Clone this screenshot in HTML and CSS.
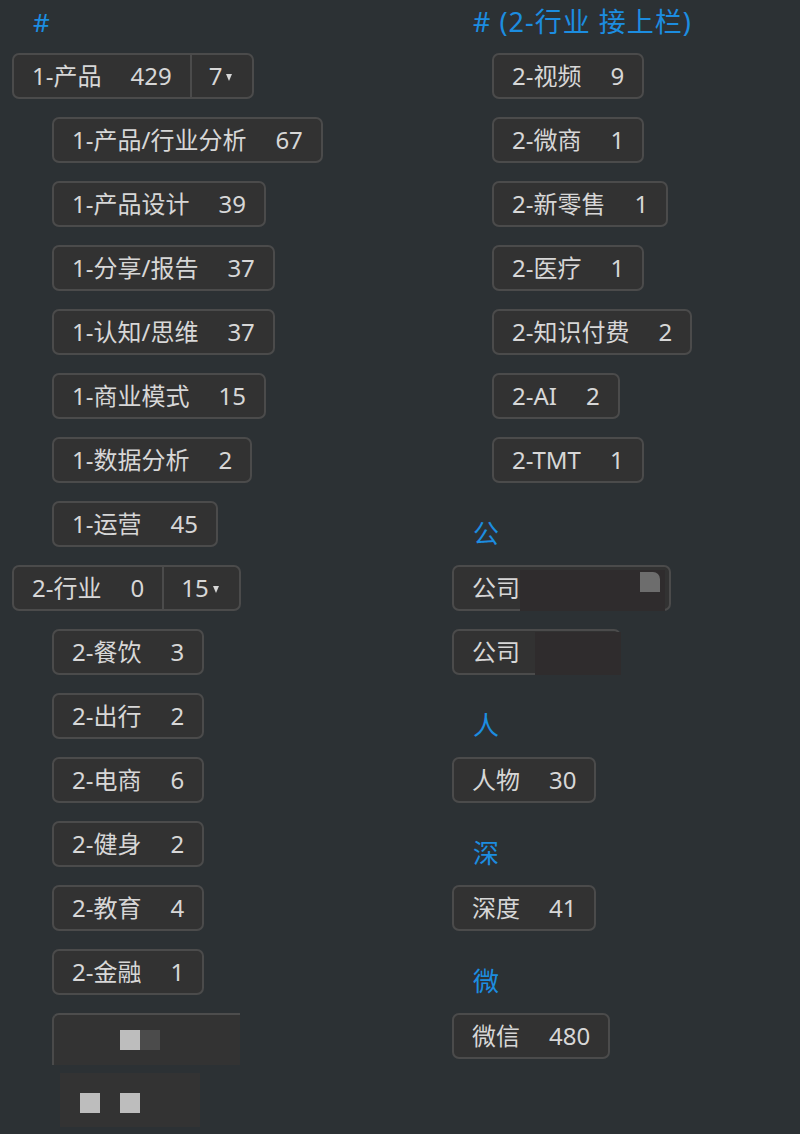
FILE: index.html
```html
<!DOCTYPE html>
<html lang="zh">
<head>
<meta charset="utf-8">
<title>Tags</title>
<link rel="stylesheet" href="styles.css">
</head>
<body>
<div class="page">
  <div class="col col-left">
    <div class="head head-top">#</div>
    <div class="tag split">
      <span class="seg"><span class="lbl">1-产品</span><span class="num">429</span></span>
      <span class="seg drop">7<span class="caret"></span></span>
    </div>
    <div class="tag sub"><span class="lbl">1-产品/行业分析</span><span class="num">67</span></div>
    <div class="tag sub"><span class="lbl">1-产品设计</span><span class="num">39</span></div>
    <div class="tag sub"><span class="lbl">1-分享/报告</span><span class="num">37</span></div>
    <div class="tag sub"><span class="lbl">1-认知/思维</span><span class="num">37</span></div>
    <div class="tag sub"><span class="lbl">1-商业模式</span><span class="num">15</span></div>
    <div class="tag sub"><span class="lbl">1-数据分析</span><span class="num">2</span></div>
    <div class="tag sub"><span class="lbl">1-运营</span><span class="num">45</span></div>
    <div class="tag split">
      <span class="seg"><span class="lbl">2-行业</span><span class="num">0</span></span>
      <span class="seg drop">15<span class="caret"></span></span>
    </div>
    <div class="tag sub"><span class="lbl">2-餐饮</span><span class="num">3</span></div>
    <div class="tag sub"><span class="lbl">2-出行</span><span class="num">2</span></div>
    <div class="tag sub"><span class="lbl">2-电商</span><span class="num">6</span></div>
    <div class="tag sub"><span class="lbl">2-健身</span><span class="num">2</span></div>
    <div class="tag sub"><span class="lbl">2-教育</span><span class="num">4</span></div>
    <div class="tag sub"><span class="lbl">2-金融</span><span class="num">1</span></div>
    <div class="masked masked-a">
      <span class="sq sq-light"></span><span class="sq sq-dark"></span>
    </div>
    <div class="masked masked-b">
      <span class="sq sq-light"></span><span class="sq sq-light"></span>
    </div>
  </div>

  <div class="col col-right">
    <div class="head head-top head-wide"># (2-行业 接上栏)</div>
    <div class="tag sub"><span class="lbl">2-视频</span><span class="num">9</span></div>
    <div class="tag sub"><span class="lbl">2-微商</span><span class="num">1</span></div>
    <div class="tag sub"><span class="lbl">2-新零售</span><span class="num">1</span></div>
    <div class="tag sub"><span class="lbl">2-医疗</span><span class="num">1</span></div>
    <div class="tag sub"><span class="lbl">2-知识付费</span><span class="num">2</span></div>
    <div class="tag sub"><span class="lbl">2-AI</span><span class="num">2</span></div>
    <div class="tag sub"><span class="lbl">2-TMT</span><span class="num">1</span></div>

    <div class="head">公</div>
    <div class="tag redacted r1"><span class="lbl">公司</span><span class="spacer sp1"></span><span class="cover cover1"><span class="doc"></span></span></div>
    <div class="tag redacted r2"><span class="lbl">公司</span><span class="spacer sp2"></span><span class="cover cover2"></span></div>

    <div class="head">人</div>
    <div class="tag"><span class="lbl">人物</span><span class="num">30</span></div>

    <div class="head">深</div>
    <div class="tag"><span class="lbl">深度</span><span class="num">41</span></div>

    <div class="head">微</div>
    <div class="tag"><span class="lbl">微信</span><span class="num">480</span></div>
  </div>
</div>
</body>
</html>
```

FILE: styles.css
```css
html, body {
  margin: 0;
  padding: 0;
  background: #2c3134;
}
body {
  font-family: "Noto Sans", "Noto Sans CJK SC", sans-serif;
  color: #d7d7d7;
  width: 800px;
  height: 1134px;
  overflow: hidden;
}
.page {
  display: flex;
  padding-left: 12px;
}
.col {
  display: flex;
  flex-direction: column;
  align-items: flex-start;
}
.col-left {
  width: 440px;
}
.head {
  color: #1c8de0;
  font-size: 26px;
  height: 64px;
  line-height: 64px;
  padding-left: 21px;
}
.head-top {
  height: 53px;
  line-height: 44px;
}
.head-wide {
  font-size: 27px;
  letter-spacing: 1px;
}
.tag {
  display: flex;
  align-items: center;
  height: 42px;
  line-height: 42px;
  padding: 0 18px;
  border: 2px solid #4b4b4b;
  border-radius: 7px;
  background: #323232;
  font-size: 24px;
  margin-bottom: 18px;
  white-space: nowrap;
}
.tag.sub {
  margin-left: 40px;
}
.num {
  margin-left: 29px;
}
.split {
  padding: 0;
}
.seg {
  display: flex;
  align-items: center;
  padding: 0 18px;
  height: 42px;
}
.drop {
  border-left: 2px solid #4b4b4b;
  padding: 0 20px 0 17px;
}
.caret {
  display: inline-block;
  width: 0;
  height: 0;
  margin-left: 4px;
  margin-top: 3px;
  border-left: 3.5px solid transparent;
  border-right: 3.5px solid transparent;
  border-top: 7px solid #d7d7d7;
}
.redacted {
  position: relative;
}
.spacer {
  display: inline-block;
}
.sp1 { width: 131px; }
.sp2 { width: 81px; }
.cover {
  position: absolute;
  background: #2f2c2d;
}
.cover1 {
  left: 66px;
  right: 4px;
  top: 3px;
  bottom: -2px;
}
.cover2 {
  left: 81px;
  right: -2px;
  top: 1px;
  bottom: -2px;
}
.doc {
  position: absolute;
  right: 5px;
  top: 2px;
  width: 20px;
  height: 20px;
  background: #6d6d6d;
  border-top-right-radius: 7px;
}
.masked {
  display: flex;
  align-items: flex-start;
  background: #333333;
}
.masked-a {
  margin-left: 40px;
  width: 186px;
  height: 35px;
  padding-top: 15px;
  border-top: 2px solid #4d4d4d;
  border-left: 2px solid #4a4a4a;
  border-top-left-radius: 7px;
  box-sizing: content-box;
}
.masked-a .sq:first-child {
  margin-left: 66px;
}
.masked-b {
  margin-left: 48px;
  margin-top: 8px;
  width: 140px;
  height: 54px;
  padding-top: 20px;
  box-sizing: border-box;
}
.masked-b .sq:first-child {
  margin-left: 20px;
}
.masked-b .sq + .sq {
  margin-left: 20px;
}
.sq {
  display: inline-block;
  width: 20px;
  height: 20px;
}
.sq-light {
  background: #bdbdbd;
}
.sq-dark {
  background: #4b4b4b;
}
```
